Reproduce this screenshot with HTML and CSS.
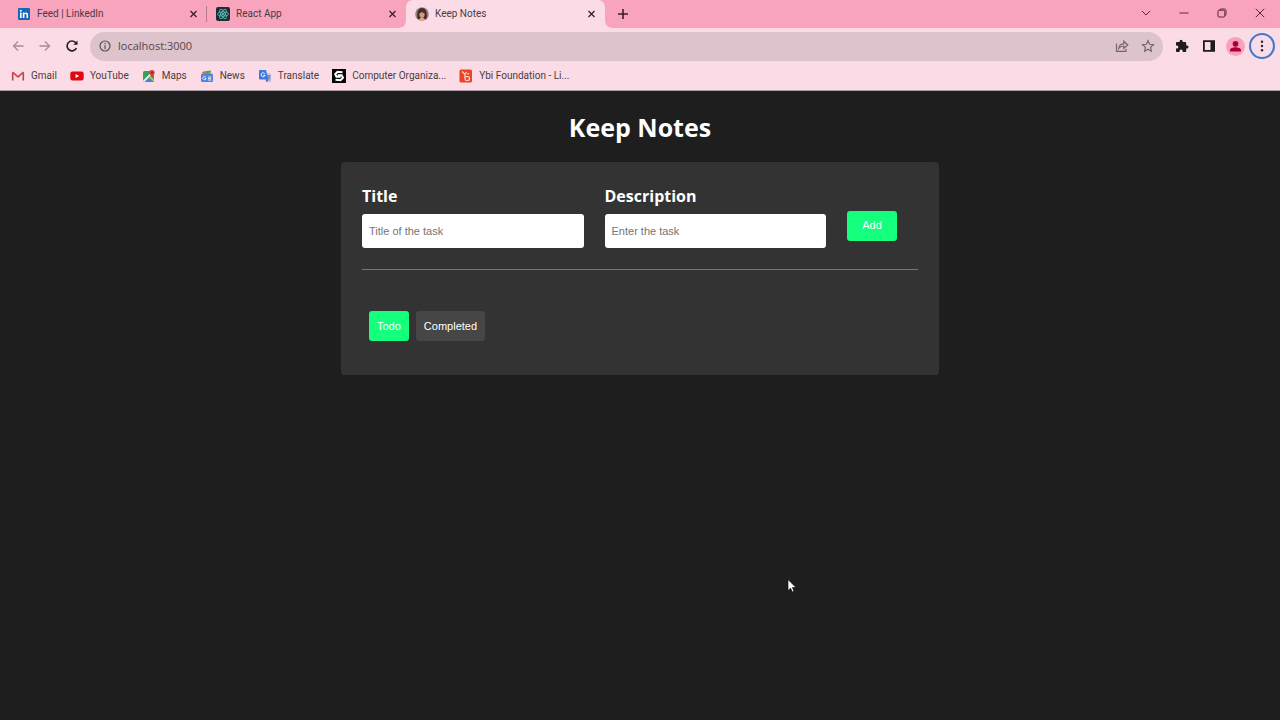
FILE: index.html
```html
<!DOCTYPE html>
<html lang="en">
<head>
<meta charset="utf-8">
<meta name="viewport" content="width=device-width, initial-scale=1">
<title>Keep Notes</title>
<link rel="stylesheet" href="styles.css">
</head>
<body>
<div class="browser">
  <header class="chrome">
    <div class="tab-strip">
      <div class="tab tab-divided">
        <svg class="tab-icon" viewBox="0 0 12 12" aria-hidden="true"><rect width="12" height="12" rx="1" fill="#1567b8"/><path d="M2 4.600h1.600V10H2zM4.800 4.600h1.500v.8c.4-.6 1-.9 1.800-.9 1.500 0 2 .9 2 2.400V10H8.500V7.200c0-.8-.2-1.300-.9-1.300S6.400 6.400 6.400 7.200V10H4.800z" fill="#fff"/><circle cx="2.800" cy="2.800" r="1" fill="#fff"/></svg>
        <button class="tab-title" type="button">Feed | LinkedIn</button>
        <button class="tab-close" type="button" aria-label="Close Feed | LinkedIn"><svg viewBox="0 0 8 8"><path d="M1 1l6 6M7 1L1 7"/></svg></button>
      </div>
      <div class="tab">
        <svg class="tab-icon tab-icon-wide" viewBox="0 0 14 14" aria-hidden="true"><rect width="14" height="14" rx="2" fill="#222b30"/><g fill="none" stroke="#55c5c5" stroke-width=".8"><ellipse cx="7" cy="7" rx="5.400" ry="2.100"/><ellipse cx="7" cy="7" rx="5.400" ry="2.100" transform="rotate(60 7 7)"/><ellipse cx="7" cy="7" rx="5.400" ry="2.100" transform="rotate(120 7 7)"/></g><circle cx="7" cy="7" r="1" fill="#62dada"/></svg>
        <button class="tab-title" type="button">React App</button>
        <button class="tab-close" type="button" aria-label="Close React App"><svg viewBox="0 0 8 8"><path d="M1 1l6 6M7 1L1 7"/></svg></button>
      </div>
      <div class="tab tab-active">
        <svg class="tab-icon tab-icon-wide" viewBox="0 0 14 14" aria-hidden="true"><circle cx="7" cy="7" r="6.800" fill="#8c8480"/><path d="M2.500 12C1.500 5 3 1 7 1s5.500 4 4.500 11L9 13H5z" fill="#4b2c2b"/><path d="M4.300 6.500C5.500 6.300 6.700 5.400 7 4.500c.5 1 1.400 1.700 2.700 2 0 2.800-1 4.500-2.700 4.500S4.300 9.300 4.300 6.500z" fill="#d99a82"/><path d="M3.500 12.800c1-1.500 2.200-1.800 3.500-1.800s2.500.3 3.500 1.800C8 14.200 6 14.200 3.500 12.800z" fill="#e5a77d"/></svg>
        <button class="tab-title" type="button">Keep Notes</button>
        <button class="tab-close" type="button" aria-label="Close Keep Notes"><svg viewBox="0 0 8 8"><path d="M1 1l6 6M7 1L1 7"/></svg></button>
      </div>
      <button class="new-tab" type="button" aria-label="New tab"><svg viewBox="0 0 12 12"><path d="M6 1v10M1 6h10"/></svg></button>
      <div class="window-controls">
        <button type="button" aria-label="Search tabs"><svg viewBox="0 0 10 10"><path d="M1 3l4 4 4-4"/></svg></button>
        <button type="button" aria-label="Minimize"><svg viewBox="0 0 10 10"><path d="M.5 5h9"/></svg></button>
        <button type="button" aria-label="Restore"><svg viewBox="0 0 10 10"><rect x="1" y="2.200" width="6.800" height="6.800" rx="1"/><path d="M3 2V1.500Q3 1 4 1h3.500Q9 1 9 2.500V6.500q0 1-1 1"/></svg></button>
        <button type="button" aria-label="Close window"><svg viewBox="0 0 10 10"><path d="M.8.8l8.400 8.400M9.200.8L.8 9.200"/></svg></button>
      </div>
    </div>

    <div class="toolbar">
      <button class="tool tool-muted" type="button" aria-label="Back"><svg viewBox="0 0 14 14"><path d="M12.500 7H2.500M7 2.500L2.500 7 7 11.500"/></svg></button>
      <button class="tool tool-muted" type="button" aria-label="Forward"><svg viewBox="0 0 14 14"><path d="M1.500 7h10M7 2.500L11.500 7 7 11.500"/></svg></button>
      <button class="tool tool-reload" type="button" aria-label="Reload"><svg viewBox="0 0 14 14"><path d="M11.400 9A4.900 4.900 0 1 1 10.600 3.600L12 5"/><path d="M12.500 1.500v4.200H8.300z" fill="#2b2227" stroke="none"/></svg></button>
      <div class="omnibox">
        <svg class="info-icon" viewBox="0 0 12 12" aria-hidden="true"><circle cx="6" cy="6" r="5"/><path d="M6 5.300V9M6 3v1.200"/></svg>
        <input class="address" type="text" value="localhost:3000" aria-label="Address">
        <button class="omni-button" type="button" aria-label="Share"><svg viewBox="0 0 14 14"><path d="M1.500 4.500v7.800h9.500V10M3.800 9.500c.3-3 2-4.700 5-4.700V2.200L12.800 6 8.800 9.500V7C6.500 7 5 7.800 3.800 9.500z"/></svg></button>
        <button class="omni-button" type="button" aria-label="Bookmark this page"><svg viewBox="0 0 14 14"><path d="M7 1.700l1.600 3.600 3.900.4-2.900 2.600.8 3.900L7 10.200l-3.400 2 .8-3.900-2.900-2.600 3.900-.4z"/></svg></button>
      </div>
      <div class="tool-group">
        <button class="tool" type="button" aria-label="Extensions"><svg viewBox="0 0 14 14"><path d="M12 6.600h-.8V4.200c0-.7-.5-1.200-1.200-1.200H7.600v-.7a1.500 1.500 0 0 0-3 0V3H2.200C1.500 3 1 3.500 1 4.200v2.200h.8a1.600 1.600 0 0 1 0 3.200H1v2.300c0 .7.500 1.200 1.200 1.200h2.300v-.9a1.600 1.600 0 0 1 3.200 0v.9H10c.7 0 1.200-.5 1.200-1.200V9.600h.8a1.500 1.500 0 0 0 0-3z" fill="#1f1a1d" stroke="none"/></svg></button>
        <button class="tool" type="button" aria-label="Side panel"><svg viewBox="0 0 14 14"><path d="M1 1.200h12v11.600H1zM2.800 3v8h5.700V3z" fill="#1f1a1d" fill-rule="evenodd" stroke="none"/></svg></button>
        <button class="tool tool-profile" type="button" aria-label="Profile"><svg viewBox="0 0 18 18"><circle cx="9" cy="9" r="9" fill="#f7a1bb"/><circle cx="9" cy="6.500" r="2.700" fill="#ad0037"/><path d="M3.800 13.800v-1.300c0-2 3-2.800 5.200-2.800s5.200.8 5.200 2.800v1.300z" fill="#ad0037"/></svg></button>
        <button class="tool tool-menu" type="button" aria-label="Menu"><svg viewBox="0 0 14 14"><g fill="#2b2227" stroke="none"><circle cx="7" cy="2.800" r="1.200"/><circle cx="7" cy="7" r="1.200"/><circle cx="7" cy="11.200" r="1.200"/></g></svg></button>
      </div>
    </div>

    <nav class="bookmarks" aria-label="Bookmarks">
      <a href="#gmail"><svg viewBox="0 0 14 14" aria-hidden="true"><path d="M1.700 11.500V3.500" stroke="#b5445e" stroke-width="1.600"/><path d="M12.300 11.500V3.500" stroke="#a2504f" stroke-width="1.600"/><path d="M1.500 3.200L7 7.800l5.500-4.600" fill="none" stroke="#d9443c" stroke-width="1.700"/></svg>Gmail</a>
      <a href="#youtube"><svg viewBox="0 0 14 14" aria-hidden="true"><rect x=".3" y="2.500" width="13.400" height="9" rx="2.200" fill="#e30613"/><path d="M5.600 5v4L9.200 7z" fill="#fff"/></svg>YouTube</a>
      <a href="#maps"><svg viewBox="0 0 14 14" aria-hidden="true"><rect x="1" y="2" width="11" height="11" rx="1.500" fill="#35a45b"/><path d="M2 13l5-5 5 5z" fill="#4287dc"/><path d="M1.500 12.500L10 4" stroke="#f3e6dc" stroke-width="2"/><path d="M8 8l4 4" stroke="#eac14c" stroke-width="1.500"/><path d="M10 8.500C9.500 6.500 7.300 5.800 7.300 3.700a2.700 2.700 0 1 1 5.400 0C12.700 5.800 10.500 6.500 10 8.500z" fill="#da3d36"/><circle cx="10" cy="3.700" r=".9" fill="#82252a"/></svg>Maps</a>
      <a href="#news"><svg viewBox="0 0 14 14" aria-hidden="true"><path d="M3 2.500l8-1v4H3z" fill="#4fa565"/><path d="M1.500 4.500l1-1.500 10 2z" fill="#d86a5d"/><path d="M9 3l3.500.8-.5 3z" fill="#e8b84d"/><rect x="1" y="5" width="12" height="8" rx="1.200" fill="#4d83df"/><path d="M6 8.200a1.700 1.700 0 1 0 .2 1.300H4.800M8 8h3.500M8 9.500h3M8 11h3.500" fill="none" stroke="#eaf0ff" stroke-width=".9"/></svg>News</a>
      <a href="#translate"><svg viewBox="0 0 14 14" aria-hidden="true"><path d="M6 4.500h6q1 0 1 1V12q0 1-1 1H8z" fill="#b9bed6"/><path d="M2 1h6l2.500 9.500H2q-1 0-1-1V2q0-1 1-1z" fill="#3d7be0"/><path d="M8 10.500h2.500L8.500 13z" fill="#2456b8"/><path d="M6.900 4.700a2 2 0 1 0 .2 1.500H5.300" fill="none" stroke="#fff" stroke-width=".9"/><path d="M9 7h3.500M11 6v1M12 7c-.3 1.500-1 2.500-2 3M10 8l2.200 2.500" fill="none" stroke="#5873b8" stroke-width=".7"/></svg>Translate</a>
      <a href="#computer"><svg viewBox="0 0 14 14" aria-hidden="true"><rect width="14" height="14" fill="#050505"/><path d="M10.500 3.200L5.500 2.800 3.200 5.200l1.300 2.500 4.200.1M3.500 10.800l5 .5 2.500-2.400-1.300-2.600-4-.1" fill="none" stroke="#fff" stroke-width="2"/></svg>Computer Organiza...</a>
      <a href="#ybi"><svg viewBox="0 0 14 14" aria-hidden="true"><rect x=".5" y=".5" width="12.500" height="13" rx="1.500" fill="#ea4423"/><path d="M3 2.500l3 3V10q0 1.500 1.500 1.500h1Q10.500 11.500 10.500 9.500T8.500 7.500L6 7.700M5.700 5l2-1.800M8.500 5.500l1.500-1.200" fill="none" stroke="#ffd9cf" stroke-width="1.200"/></svg>Ybi Foundation - Li...</a>
    </nav>
  </header>

  <main class="page">
    <h1>Keep Notes</h1>
    <section class="card">
      <form class="task-form">
        <div class="field">
          <label for="task-title">Title</label>
          <input id="task-title" type="text" placeholder="Title of the task">
        </div>
        <div class="field">
          <label for="task-desc">Description</label>
          <input id="task-desc" type="text" placeholder="Enter the task">
        </div>
        <button class="btn btn-green btn-add" type="button">Add</button>
      </form>
      <div class="filters">
        <button class="btn btn-green" type="button">Todo</button>
        <button class="btn btn-gray" type="button">Completed</button>
      </div>
    </section>
    <svg class="pointer" viewBox="0 0 10 14" aria-hidden="true"><path d="M1 .5v11l2.600-2.300 1.700 3.800 1.700-.8-1.600-3.600H9z" fill="#fff" stroke="#000" stroke-width=".6"/></svg>
  </main>
</div>
</body>
</html>
```
FILE: styles.css
```css
* {
  box-sizing: border-box;
}

body {
  margin: 0;
  background: #1e1e1e;
  font-family: "Open Sans", "Noto Sans", sans-serif;
}

button,
input {
  margin: 0;
  padding: 0;
  border: 0;
  background: none;
  font: inherit;
  color: inherit;
}

svg {
  display: block;
  flex: none;
}

.browser {
  display: flex;
  flex-direction: column;
  min-height: 100vh;
}

.chrome {
  background: #fbdbe5;
  border-bottom: 1px solid #a8989f;
  color: #4a3b42;
  font-family: Roboto, "Open Sans", sans-serif;
  font-size: 10px;
  line-height: 14px;
}

/* Tab strip */
.tab-strip {
  display: flex;
  height: 28px;
  padding-left: 8px;
  background: #f9a4bd;
}

.tab {
  display: flex;
  flex: 0 1 199px;
  align-items: center;
  gap: 6px;
  min-width: 0;
  padding: 0 8px 0 9px;
}

.tab-divided {
  background: linear-gradient(#b57a8c, #b57a8c) right center / 1px 16px no-repeat;
}

.tab-active {
  position: relative;
  border-radius: 7px 7px 0 0;
  background: #fbdbe5;
}

.tab-active::before,
.tab-active::after {
  content: "";
  position: absolute;
  bottom: 0;
  width: 6px;
  height: 6px;
}

.tab-active::before {
  right: 100%;
  background: radial-gradient(circle at 0 0, transparent 5px, #fbdbe5 6px);
}

.tab-active::after {
  left: 100%;
  background: radial-gradient(circle at 100% 0, transparent 5px, #fbdbe5 6px);
}

.tab-icon {
  width: 14px;
  height: 12px;
}

.tab-icon-wide {
  height: 14px;
}

.tab-title {
  flex: 1;
  overflow: hidden;
  text-align: left;
  white-space: nowrap;
}

.tab-close svg {
  width: 11px;
  height: 8px;
  fill: none;
  stroke: #3b2029;
  stroke-width: 1.3;
}

.new-tab {
  width: 36px;
}

.new-tab svg {
  width: 12px;
  height: 12px;
  margin: 0 auto;
  fill: none;
  stroke: #3b2029;
  stroke-width: 1.6;
}

.window-controls {
  display: flex;
  margin: 0 1px 0 auto;
}

.window-controls button {
  display: grid;
  place-items: center;
  width: 38px;
  height: 25px;
}

.window-controls svg {
  width: 10px;
  height: 10px;
  fill: none;
  stroke: #5c2738;
  stroke-width: 1;
}

/* Toolbar */
.toolbar {
  display: flex;
  align-items: center;
  height: 36px;
  padding: 0 5px 0 4px;
}

.tool {
  display: grid;
  place-items: center;
  width: 27px;
  height: 27px;
}

.tool svg {
  width: 14px;
  height: 14px;
  fill: none;
  stroke: #2b2227;
  stroke-width: 1.7;
}

.tool-muted svg {
  stroke: #a78d98;
  stroke-width: 1.3;
}

.omnibox {
  display: flex;
  flex: 1;
  align-items: center;
  height: 29px;
  margin-left: 5px;
  padding: 0 2px 0 9px;
  border-radius: 15px;
  background: #dcc3cc;
}

.info-icon {
  width: 12px;
  height: 12px;
  fill: none;
  stroke: #5f5158;
  stroke-width: 1.2;
}

.address {
  flex: 1;
  min-width: 0;
  margin-left: 7px;
  color: #55464d;
  font-family: "Open Sans", "Noto Sans", sans-serif;
  font-size: 11px;
}

.omni-button {
  display: grid;
  place-items: center;
  width: 26px;
  height: 26px;
}

.omni-button svg {
  width: 14px;
  height: 14px;
  fill: none;
  stroke: #77666e;
  stroke-width: 1.2;
}

.tool-group {
  display: flex;
  margin-left: 5px;
}

.tool-profile svg {
  width: 19px;
  height: 19px;
  stroke: none;
}

.tool-menu {
  width: 26px;
  height: 26px;
  border: 2px solid #3f78d0;
  border-radius: 50%;
}

/* Bookmarks bar */
.bookmarks {
  display: flex;
  gap: 13px;
  align-items: center;
  height: 26px;
  padding: 0 11px 3px;
}

.bookmarks a {
  display: flex;
  align-items: center;
  gap: 6px;
  color: inherit;
  text-decoration: none;
  white-space: nowrap;
}

.bookmarks svg {
  width: 14px;
  height: 14px;
}

/* Keep Notes page */
.page {
  position: relative;
  flex: 1;
  padding: 16px 20px 40px;
  color: #fff;
}

h1 {
  margin: 0 0 15px;
  font-size: 25px;
  line-height: 40px;
  text-align: center;
}

.card {
  max-width: 598px;
  margin: 0 auto;
  padding: 21px 21px 34px;
  border-radius: 4px;
  background: #333;
}

.task-form {
  display: flex;
  align-items: center;
  gap: 21px;
  padding: 0 21px 21px 0;
  border-bottom: 1px solid #777;
}

.field {
  flex: 1;
  min-width: 0;
}

.field label {
  display: block;
  margin-bottom: 5px;
  font-size: 16px;
  font-weight: 700;
  line-height: 26px;
}

.field input {
  display: block;
  width: 100%;
  height: 34px;
  padding: 0 7px;
  border-radius: 3px;
  background: #fff;
  color: #222;
  font: 11px "Liberation Sans", Arial, sans-serif;
}

.field input::placeholder {
  color: #757575;
}

.filters {
  display: flex;
  gap: 7px;
  padding: 41px 7px 0;
}

.btn {
  height: 30px;
  padding: 0 8px;
  border-radius: 3px;
  color: #fff;
  font: 11px "Liberation Sans", Arial, sans-serif;
}

.btn-green {
  background: #14ff7c;
}

.btn-gray {
  background: #464646;
}

.btn-add {
  width: 50px;
  margin-top: 20px;
  padding-bottom: 2px;
}

.pointer {
  position: absolute;
  top: 488px;
  left: 787px;
  width: 10px;
  height: 14px;
}
```
